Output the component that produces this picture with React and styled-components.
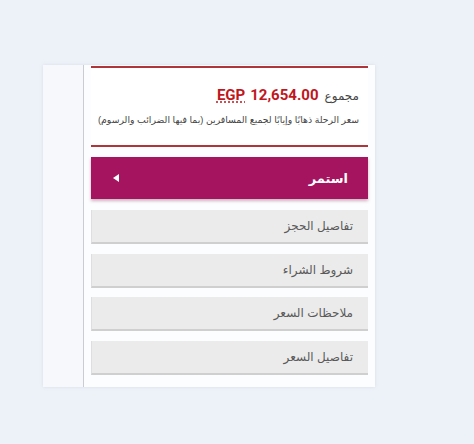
import React from "react";
import styled, { createGlobalStyle } from "styled-components";

const Global = createGlobalStyle`
  html, body {
    margin: 0;
    padding: 0;
    background: #edf1f8;
    font-family: "Liberation Sans", "DejaVu Sans", sans-serif;
  }
`;

const Page = styled.div`
  padding: 65px 0 0 43px;
  height: 444px;
  box-sizing: border-box;
`;

const Panel = styled.div`
  display: flex;
  width: 332px;
  height: 322px;
  background: #fcfdfe;
  box-shadow: 0 0 3px rgba(180, 190, 205, 0.35);
`;

const Side = styled.div`
  flex: 0 0 40px;
  background: #f6f8fb;
  border-right: 1px solid #c9cdd3;
`;

const Content = styled.div`
  flex: 1;
  min-width: 0;
  direction: rtl;
  padding: 1px 7px 0 7px;
  display: flex;
  flex-direction: column;
`;

const TotalBox = styled.div`
  border-top: 2px solid #b0353b;
  border-bottom: 2px solid #b0353b;
  background: #ffffff;
  padding: 18px 9px 0 9px;
  height: 81px;
  box-sizing: border-box;
`;

const TotalLine = styled.div`
  display: flex;
  align-items: baseline;
  gap: 6px;
  color: #444;
  font-size: 12px;
`;

const Amount = styled.span`
  direction: ltr;
  color: #c0171d;
  font-weight: bold;
  font-size: 15px;
  font-family: "Roboto", "Liberation Sans", sans-serif;

  abbr {
    text-decoration: underline dotted;
    text-underline-offset: 2px;
    margin-right: 5px;
  }
`;

const Note = styled.div`
  margin-top: 10px;
  color: #444;
  font-size: 9.3px;
  white-space: nowrap;
`;

const Continue = styled.button`
  margin-top: 10px;
  height: 42px;
  border: none;
  background: #a5145f;
  color: #fff;
  font-family: inherit;
  font-weight: bold;
  font-size: 13px;
  display: flex;
  align-items: center;
  justify-content: space-between;
  padding: 0 20px 0 22px;
  box-shadow: 0 2px 3px rgba(120, 40, 80, 0.35);
  cursor: pointer;
`;

const Arrow = styled.span`
  width: 0;
  height: 0;
  border-top: 4px solid transparent;
  border-bottom: 4px solid transparent;
  border-right: 6px solid #fff;
`;

const Items = styled.div`
  margin-top: 11px;
  display: flex;
  flex-direction: column;
  gap: 9.5px;
`;

const Item = styled.div`
  height: 34px;
  box-sizing: border-box;
  background: #ebebeb;
  border-bottom: 2px solid #cfcfcf;
  border-left: 1px solid #dedede;
  color: #5a5a5a;
  font-size: 12px;
  display: flex;
  align-items: center;
  padding-right: 15px;
`;

const sections = ["تفاصيل الحجز", "شروط الشراء", "ملاحظات السعر", "تفاصيل السعر"];

export default function App() {
  return (
    <>
      <Global />
      <Page>
        <Panel>
          <Side />
          <Content>
            <TotalBox>
              <TotalLine>
                <span>مجموع</span>
                <Amount>
                  <abbr title="Egyptian Pound">EGP</abbr>12,654.00
                </Amount>
              </TotalLine>
              <Note>سعر الرحلة ذهابًا وإيابًا لجميع المسافرين (بما فيها الضرائب والرسوم)</Note>
            </TotalBox>
            <Continue>
              <span>استمر</span>
              <Arrow />
            </Continue>
            <Items>
              {sections.map((s) => (
                <Item key={s}>{s}</Item>
              ))}
            </Items>
          </Content>
        </Panel>
      </Page>
    </>
  );
}
